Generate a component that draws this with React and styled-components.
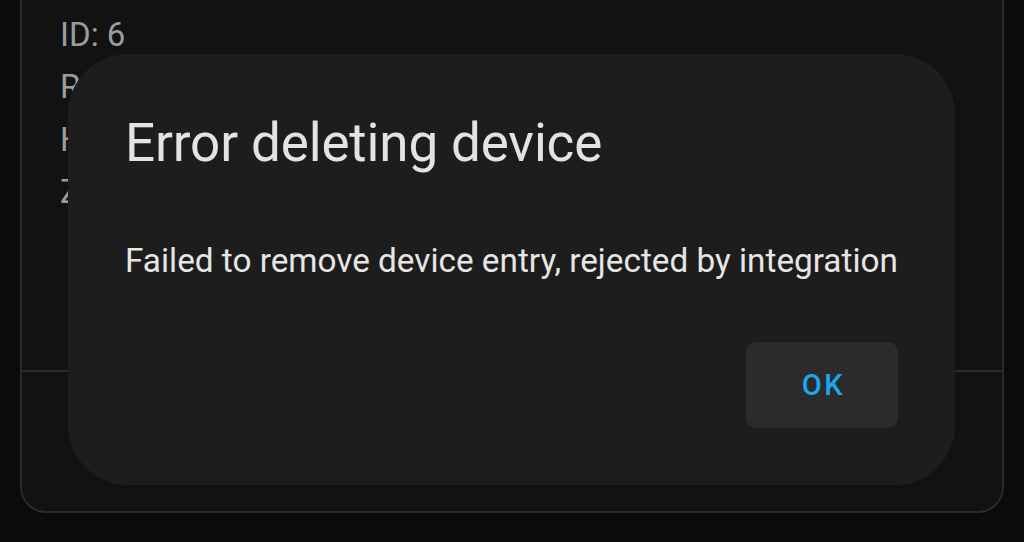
import React from "react";
import styled, { createGlobalStyle } from "styled-components";

const Global = createGlobalStyle`
  html, body {
    margin: 0;
    padding: 0;
    background: #0b0b0b;
    font-family: Roboto, "Noto Sans", "Liberation Sans", sans-serif;
    overflow: hidden;
  }
  #root {
    width: 1024px;
    height: 542px;
    position: relative;
    overflow: hidden;
  }
`;

const Page = styled.div`
  width: 1024px;
  height: 542px;
  padding: 0 20px;
  box-sizing: border-box;
`;

const Card = styled.section`
  margin-top: -40px;
  height: 553px;
  box-sizing: border-box;
  background: #121212;
  border: 2px solid #2a2a2a;
  border-radius: 26px;
  display: flex;
  flex-direction: column;
  overflow: hidden;
`;

const CardContent = styled.div`
  height: 410px;
  box-sizing: border-box;
  padding: 47px 38px 0;
  border-bottom: 2px solid #2a2a2a;
`;

const InfoLine = styled.div`
  font-size: 33px;
  line-height: 52.3px;
  color: #9c9c9c;
  white-space: nowrap;
`;

const CardActions = styled.div`
  flex: 1;
`;

const Dialog = styled.div`
  position: absolute;
  left: 68px;
  top: 54px;
  width: 887px;
  box-sizing: border-box;
  padding: 57px 57px 57px 55px;
  background: #1d1d1d;
  border-radius: 60px;
  display: flex;
  flex-direction: column;
`;

const Title = styled.h2`
  margin: 0;
  padding-left: 2px;
  font-size: 53px;
  font-weight: 400;
  line-height: 64.8px;
  letter-spacing: -0.15px;
  color: #e3e3e3;
`;

const Body = styled.p`
  margin: 60px 0 0;
  padding-left: 2px;
  font-size: 33.3px;
  line-height: 49.5px;
  color: #e6e6e6;
  white-space: nowrap;
`;

const Actions = styled.div`
  margin-top: 57px;
  display: flex;
  justify-content: flex-end;
`;

const Button = styled.button`
  width: 152px;
  height: 86px;
  border: none;
  border-radius: 10px;
  background: #2b2b2b;
  color: #1ea6ec;
  font-family: Roboto, "Noto Sans", sans-serif;
  font-size: 29px;
  font-weight: 500;
  letter-spacing: 0.09em;
  text-transform: uppercase;
  padding: 0 0 0 3px;
  cursor: pointer;
`;

export default function App() {
  return (
    <>
      <Global />
      <Page>
        <Card>
          <CardContent>
            <InfoLine>ID: 6</InfoLine>
            <InfoLine>Revision: 1</InfoLine>
            <InfoLine>Hardware: 1.0</InfoLine>
            <InfoLine>Zone: Living room</InfoLine>
          </CardContent>
          <CardActions />
        </Card>
      </Page>
      <Dialog role="dialog">
        <Title>Error deleting device</Title>
        <Body>Failed to remove device entry, rejected by integration</Body>
        <Actions>
          <Button>OK</Button>
        </Actions>
      </Dialog>
    </>
  );
}
